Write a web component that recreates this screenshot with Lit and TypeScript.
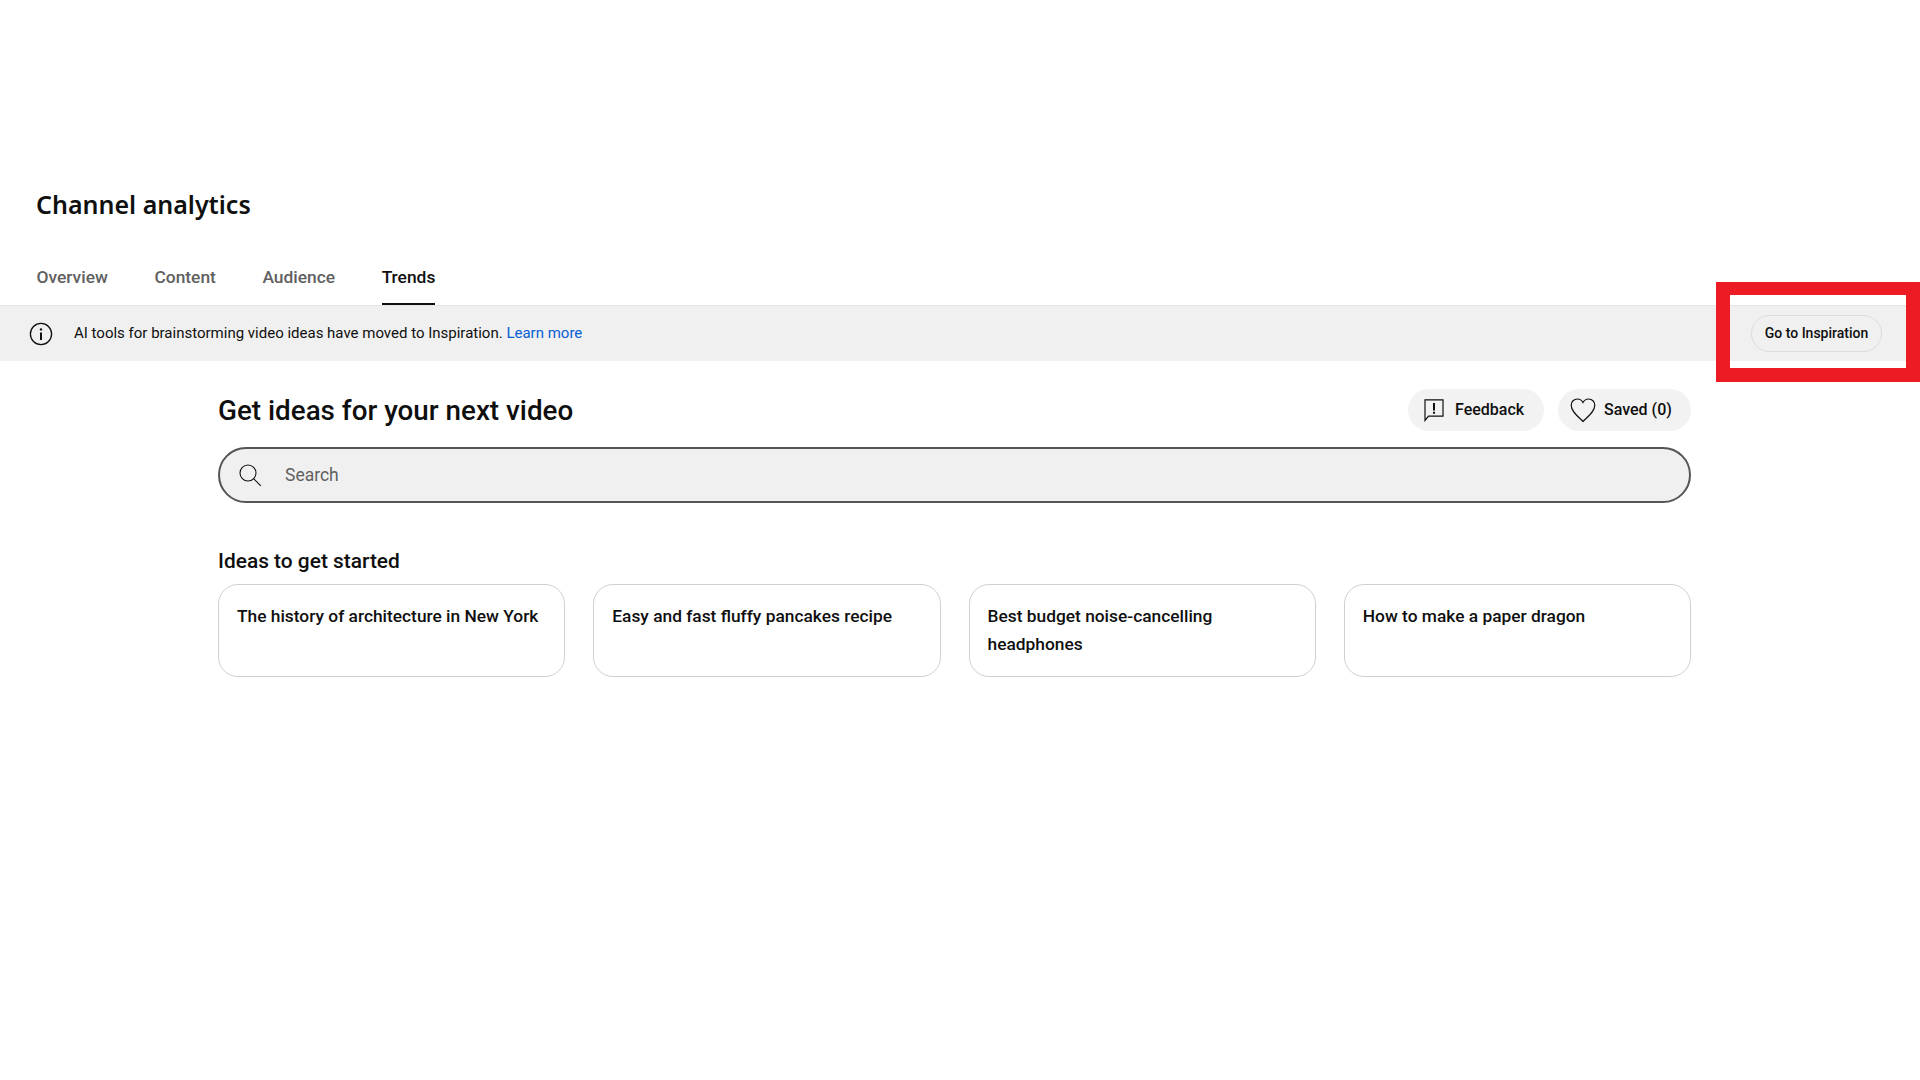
import { LitElement, html, css } from 'lit';
import { customElement } from 'lit/decorators.js';

const TABS = ['Overview', 'Content', 'Audience', 'Trends'];
const IDEAS = [
  'The history of architecture in New York',
  'Easy and fast fluffy pancakes recipe',
  'Best budget noise-cancelling headphones',
  'How to make a paper dragon',
];

@customElement('app-root')
export class AppRoot extends LitElement {
  static styles = css`
    :host {
      display: block;
      position: relative;
      height: 1080px;
      overflow: hidden;
      background: #fff;
      color: #0f0f0f;
      font-family: Roboto, 'Liberation Sans', sans-serif;
    }

    .title {
      margin: 0;
      padding: 186px 0 0 36px;
      height: 36px;
      line-height: 36px;
      font-family: 'Noto Sans', sans-serif;
      font-size: 25px;
      font-weight: 600;
    }

    .tabs {
      display: flex;
      gap: 46.5px;
      height: 54px;
      margin-top: 29px;
      padding-left: 36.5px;
    }

    .tab {
      height: 52px;
      line-height: 52px;
      font-size: 17.4px;
      font-weight: 500;
      color: #606060;
    }

    .tab.active {
      color: #0f0f0f;
      border-bottom: 2px solid #0f0f0f;
    }

    .banner {
      display: flex;
      align-items: center;
      height: 56px;
      padding: 0 38px 0 29px;
      background: #f0f0f0;
      border-top: 1px solid #e5e5e5;
      box-sizing: border-box;
      font-size: 15px;
      line-height: 20px;
    }

    .banner svg {
      width: 24px;
      height: 24px;
      margin-right: 21px;
    }

    .banner span {
      padding-bottom: 1px;
    }

    .banner a {
      color: #065fd4;
      text-decoration: none;
    }

    .go {
      margin-left: auto;
      height: 37px;
      width: 131px;
      padding: 0 0 1px;
      border: 1px solid #dcdcdc;
      border-radius: 19px;
      background: transparent;
      color: #0f0f0f;
      font: 500 14px Roboto, sans-serif;
    }

    .main {
      width: 1473px;
      margin: 0 0 0 218px;
    }

    .head {
      display: flex;
      align-items: center;
      gap: 14px;
      height: 42px;
      margin-top: 28px;
    }

    .head h1 {
      margin: 0 auto 0 0;
      font-size: 27.8px;
      font-weight: 500;
    }

    .pill {
      display: flex;
      align-items: center;
      height: 42px;
      box-sizing: border-box;
      border-radius: 21px;
      background: #f2f2f2;
      font-size: 16px;
      font-weight: 500;
      line-height: 20px;
    }

    .pill span {
      padding-bottom: 1px;
    }

    .feedback {
      width: 136px;
      padding-left: 15px;
      gap: 10px;
    }

    .saved {
      width: 133px;
      padding-left: 12px;
      gap: 8px;
    }

    .search {
      display: flex;
      align-items: center;
      height: 56px;
      margin-top: 16px;
      padding-left: 18px;
      box-sizing: border-box;
      border: 2px solid #555;
      border-radius: 28px;
      background: #f0f0f0;
      color: #606060;
      font-size: 17.5px;
    }

    .search svg {
      width: 24px;
      height: 24px;
      margin-right: 23px;
    }

    .sub {
      margin: 44px 0 0;
      height: 28px;
      line-height: 28px;
      font-size: 20.9px;
      font-weight: 500;
    }

    .cards {
      display: grid;
      grid-template-columns: repeat(4, 1fr);
      gap: 28px;
      margin-top: 9px;
    }

    .card {
      height: 93px;
      box-sizing: border-box;
      padding: 17px 18px;
      border: 1px solid #d0d0d0;
      border-radius: 20px;
      font-size: 17.35px;
      font-weight: 500;
      line-height: 28px;
    }

    /* annotation drawn on top of the page */
    .mark {
      position: absolute;
      left: 1716px;
      top: 282px;
      width: 204px;
      height: 100px;
      box-sizing: border-box;
      border: 14px solid #ed1c24;
      border-top-width: 13px;
    }

    .mark::before,
    .mark::after {
      content: '';
      position: absolute;
      left: 0;
      right: 0;
      background: #fff;
    }

    .mark::before {
      top: 0;
      height: 10px;
    }

    .mark::after {
      bottom: 0;
      height: 7px;
    }
  `;

  render() {
    return html`
      <h2 class="title">Channel analytics</h2>
      <div class="tabs">
        ${TABS.map(t => html`<div class="tab ${t === 'Trends' ? 'active' : ''}">${t}</div>`)}
      </div>
      <div class="banner">
        <svg viewBox="0 0 24 24" fill="none" stroke="#0f0f0f" stroke-width="1.3">
          <circle cx="12" cy="12" r="10.6"></circle>
          <path d="M12 10.5V18" stroke-width="2"></path>
          <circle cx="12" cy="7.4" r="1.2" fill="#0f0f0f" stroke="none"></circle>
        </svg>
        <span>AI tools for brainstorming video ideas have moved to Inspiration. <a href="#">Learn more</a></span>
        <button class="go">Go to Inspiration</button>
      </div>
      <div class="main">
        <div class="head">
          <h1>Get ideas for your next video</h1>
          <div class="pill feedback">
            <svg width="22" height="24" viewBox="0 0 22 24" fill="none" stroke="#0f0f0f" stroke-width="1.2">
              <path d="M2 22.5V1.800h18v16.400H5.500z"></path>
              <path d="M11 5v7.500M11 13.700v2" stroke-width="2"></path>
            </svg>
            <span>Feedback</span>
          </div>
          <div class="pill saved">
            <svg width="26" height="26" viewBox="0 0 26 26" fill="none" stroke="#0f0f0f" stroke-width="1.2">
              <path d="M13 24.500C8 19.500 1.200 14.500 1.200 8.200 1.200 4.700 4 2 7.400 2c2.300 0 4.400 1.300 5.600 3.500C14.200 3.300 16.300 2 18.600 2 22 2 24.800 4.700 24.800 8.200c0 6.300-6.800 11.300-11.800 16.300z"></path>
            </svg>
            <span>Saved (0)</span>
          </div>
        </div>
        <div class="search">
          <svg viewBox="0 0 24 24" fill="none" stroke="#0f0f0f" stroke-width="1.1">
            <circle cx="10" cy="10" r="8"></circle>
            <path d="M15.800 15.800l7 7"></path>
          </svg>
          <span>Search</span>
        </div>
        <h3 class="sub">Ideas to get started</h3>
        <div class="cards">
          ${IDEAS.map(i => html`<div class="card">${i}</div>`)}
        </div>
      </div>
      <div class="mark"></div>
    `;
  }
}
